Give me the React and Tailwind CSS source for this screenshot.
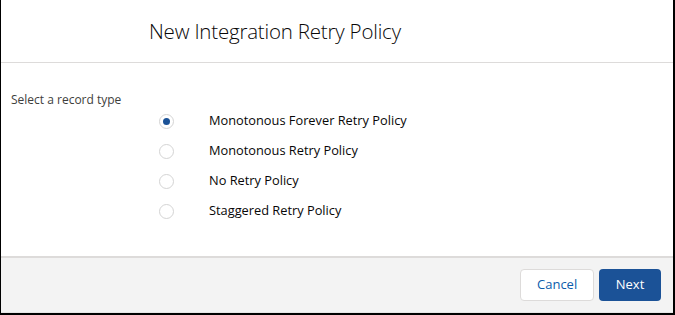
export default function App() {
  const options = [
    "Monotonous Forever Retry Policy",
    "Monotonous Retry Policy",
    "No Retry Policy",
    "Staggered Retry Policy",
  ];
  const selected = 0;

  return (
    <div
      className="w-[675px] h-[315px] flex flex-col bg-white border-l border-r-2 border-b-2 border-black text-[#3e3e3c]"
      style={{ fontFamily: "'Open Sans', 'Noto Sans', sans-serif" }}
    >
      <div className="h-[63px] flex items-center pl-[148px] border-b border-[#dddbda]">
        <h1 className="text-[20.5px] font-light text-[#080707] tracking-[-0.2px]">
          New Integration Retry Policy
        </h1>
      </div>

      <div className="flex-1 pt-[28px] pl-[10px]">
        <p className="text-[12px] leading-[18px]">Select a record type</p>
        <div className="flex flex-col -mt-[3px]">
          {options.map((opt, i) => (
            <label key={opt} className="h-[30px] flex items-center cursor-pointer">
              <span className="w-[15px] h-[15px] ml-[148px] rounded-full border border-[#d4d4d4] bg-white flex items-center justify-center">
                {i === selected && <span className="w-[7px] h-[7px] rounded-full bg-[#1b5297]" />}
              </span>
              <span className="ml-[35px] text-[12.8px] text-[#080707]">{opt}</span>
            </label>
          ))}
        </div>
      </div>

      <div className="h-[57px] bg-[#f3f3f3] border-t-2 border-[#dddbda] border-b border-b-[#e5e5e5] flex items-center justify-end gap-[5px] pr-[12px]">
        <button className="h-[32px] px-[16px] w-[74px] rounded-[4px] border border-[#dddbda] bg-white text-[#0b5cab] text-[13px]">
          Cancel
        </button>
        <button className="h-[32px] w-[62px] rounded-[4px] bg-[#1b5297] text-white text-[13px]">
          Next
        </button>
      </div>
    </div>
  );
}
